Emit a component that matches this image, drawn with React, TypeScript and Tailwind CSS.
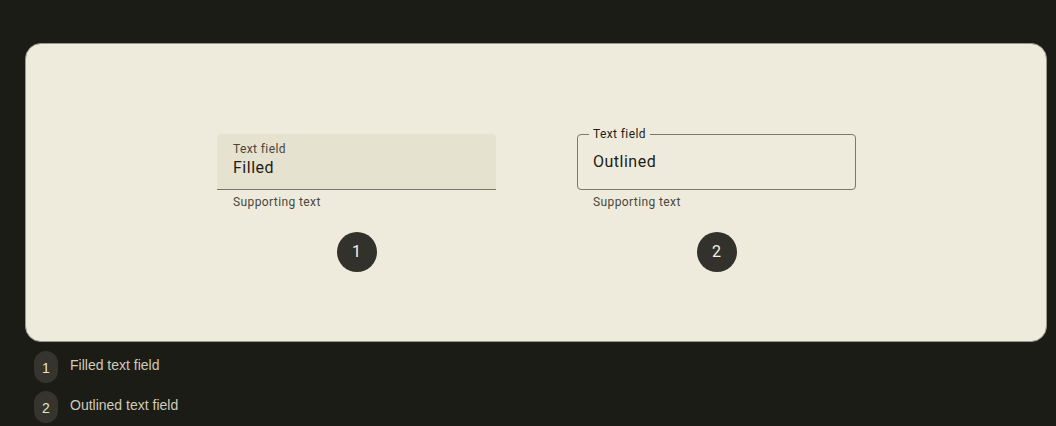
import React from "react";

const legend = [
  { n: "1", label: "Filled text field" },
  { n: "2", label: "Outlined text field" },
];

function Marker({ n }: { n: string }) {
  return (
    <div className="mx-auto mt-[22px] flex h-[40px] w-[40px] items-center justify-center rounded-full bg-[#32312b] text-[16px] text-[#f4f1e4]">
      {n}
    </div>
  );
}

export default function App() {
  return (
    <div className="min-h-screen w-full bg-[#1c1c17] pt-[43px] font-['Roboto',sans-serif]">
      {/* Demo card */}
      <div className="ml-[25px] mr-[9px] h-[299px] rounded-[16px] border border-[#9a9888] bg-[#efebdc] pt-[90px]">
        <div className="flex justify-center gap-[81px] pl-[1px]">
          {/* Filled */}
          <div className="w-[279px]">
            <div className="flex h-[56px] flex-col rounded-t-[4px] border-b border-[#7a7866] bg-[#e5e2cf] px-[16px] pt-[7px]">
              <span className="text-[12px] leading-[16px] tracking-[0.4px] text-[#49473a]">Text field</span>
              <span className="-mt-[1px] text-[16px] leading-[24px] tracking-[0.5px] text-[#1d1c16]">Filled</span>
            </div>
            <p className="px-[16px] pt-[4px] text-[12px] leading-[16px] tracking-[0.4px] text-[#49473a]">Supporting text</p>
            <Marker n="1" />
          </div>

          {/* Outlined */}
          <div className="w-[279px]">
            <div className="relative flex h-[56px] items-center rounded-[4px] border border-[#7a7866] px-[15px]">
              <span className="absolute -top-[9px] left-[11px] bg-[#efebdc] px-[4px] text-[12px] leading-[16px] tracking-[0.4px] text-[#1d1c16]">
                Text field
              </span>
              <span className="text-[16px] leading-[24px] tracking-[0.5px] text-[#1d1c16]">Outlined</span>
            </div>
            <p className="px-[16px] pt-[4px] text-[12px] leading-[16px] tracking-[0.4px] text-[#49473a]">Supporting text</p>
            <Marker n="2" />
          </div>
        </div>
      </div>

      {/* Legend */}
      <div className="ml-[34px] mt-[9px] flex flex-col gap-[8px] font-['Liberation_Sans',Arial,sans-serif]">
        {legend.map((item) => (
          <div key={item.n} className="flex items-center gap-[12px]">
            <div className="flex h-[32px] w-[24px] items-center justify-center rounded-full bg-[#35342d] pt-[2px] text-[14px] text-[#e6e2d0]">
              {item.n}
            </div>
            <span className="-mt-[3px] text-[14px] text-[#cfcbb8]">{item.label}</span>
          </div>
        ))}
      </div>
    </div>
  );
}
